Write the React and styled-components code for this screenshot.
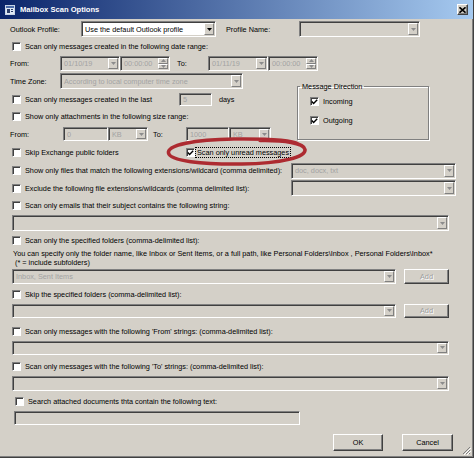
import React from "react";
import styled, { createGlobalStyle } from "styled-components";

const GlobalStyle = createGlobalStyle`
  html, body {
    margin: 0;
    padding: 0;
    background: #d4d0c8;
  }
  body {
    font-family: "Liberation Sans", Arial, sans-serif;
    font-size: 7.3px;
    color: #000;
  }
`;

const Window = styled.div`
  position: relative;
  width: 474px;
  height: 458px;
  box-sizing: border-box;
  background: #d4d0c8;
  border-right: 1px solid #404040;
  border-bottom: 1px solid #404040;
  box-shadow: inset -1px -1px #808080;
  overflow: hidden;
`;

const TitleBar = styled.div`
  height: 19px;
  display: flex;
  align-items: center;
  padding: 0 5px 0 5px;
  background: linear-gradient(to right, #0a246a, #a6caf0);
  color: #fff;
  font-weight: bold;
  font-size: 7.6px;
`;

const TitleText = styled.span`
  margin-left: 5px;
  white-space: nowrap;
`;

const CloseBtn = styled.div`
  margin-left: auto;
  width: 11px;
  height: 11px;
  box-sizing: border-box;
  background: #d4d0c8;
  border: 1px solid;
  border-color: #fff #404040 #404040 #fff;
  box-shadow: inset -1px -1px #808080;
  display: flex;
  align-items: center;
  justify-content: center;
`;

const Body = styled.div`
  padding: 1px 0 0 10px;
  display: flex;
  flex-direction: column;
`;

const Row = styled.div`
  display: flex;
  align-items: center;
  height: ${(p) => p.$h}px;
  margin-top: ${(p) => p.$mt || 0}px;
  flex: 0 0 auto;
`;

const Label = styled.span`
  flex: 0 0 ${(p) => (p.$w ? `${p.$w}px` : "auto")};
  margin-left: ${(p) => p.$ml || 0}px;
  white-space: nowrap;
  line-height: 9px;
  color: ${(p) => (p.$disabled ? "#a0a0a0" : "#000")};
`;

const Box = styled.span`
  flex: 0 0 auto;
  width: 9px;
  height: 9px;
  box-sizing: border-box;
  margin: 0 4px 0 ${(p) => (p.$ml === undefined ? 2 : p.$ml)}px;
  background: #fff;
  border: 1px solid;
  border-color: #808080 #fff #fff #808080;
  box-shadow: inset 1px 1px #404040;
  display: flex;
  align-items: center;
  justify-content: center;
`;

const Focus = styled.span`
  margin-left: -3px;
  padding: 0 1px;
  outline: 1px dotted #000;
  line-height: 9px;
  white-space: nowrap;
`;

const Field = styled.div`
  flex: 0 0 ${(p) => p.$w}px;
  width: ${(p) => p.$w}px;
  height: ${(p) => p.$h || 15}px;
  margin-left: ${(p) => p.$ml || 0}px;
  box-sizing: border-box;
  padding: 1px;
  border: 1px solid;
  border-color: #808080 #fff #fff #808080;
  box-shadow: inset 1px 1px #404040, inset -1px -1px #d4d0c8;
  background: ${(p) => (p.$white ? "#fff" : "#d4d0c8")};
  display: flex;
  align-items: stretch;
`;

const Value = styled.span`
  flex: 1;
  min-width: 0;
  padding-left: 2px;
  display: flex;
  align-items: center;
  white-space: nowrap;
  overflow: hidden;
  color: ${(p) => (p.$disabled ? "#a3a3a3" : "#000")};
`;

const SideBtn = styled.span`
  flex: 0 0 10px;
  box-sizing: border-box;
  background: #d4d0c8;
  border: 1px solid;
  border-color: #fff #808080 #808080 #fff;
  display: flex;
  align-items: center;
  justify-content: center;
`;

const Spin = styled.span`
  flex: 0 0 10px;
  display: flex;
  flex-direction: column;
  & > ${SideBtn} {
    flex: 1;
  }
`;

const Button = styled.button`
  flex: 0 0 ${(p) => p.$w}px;
  width: ${(p) => p.$w}px;
  height: ${(p) => p.$h}px;
  margin: 0 0 0 ${(p) => p.$ml || 0}px;
  padding: 0;
  box-sizing: border-box;
  font: inherit;
  background: #d4d0c8;
  border: 1px solid;
  border-color: #fff #404040 #404040 #fff;
  box-shadow: inset -1px -1px #808080;
  color: ${(p) => (p.disabled ? "#a0a0a0" : "#000")};
  text-shadow: ${(p) => (p.disabled ? "1px 1px #fff" : "none")};
  display: flex;
  align-items: center;
  justify-content: center;
`;

const Split = styled.div`
  display: grid;
  grid-template-columns: 287px 132px;
  grid-template-rows: 18px 18px 17px 18px;
  & > ${Row} {
    grid-column: 1;
  }
`;

const Group = styled.fieldset`
  grid-column: 2;
  grid-row: 1 / 5;
  align-self: start;
  height: 58px;
  box-sizing: border-box;
  margin: 10px 0 0 0;
  padding: 1px 0 0 0;
  border: 1px solid #808080;
  box-shadow: inset 1px 1px #fff, 1px 1px #fff;
  min-width: 0;
`;

const Legend = styled.legend`
  margin-left: 2px;
  padding: 0 2px;
  line-height: 9px;
  font-size: 7.3px;
`;

const Note = styled.div`
  height: 9px;
  line-height: 9px;
  padding-left: ${(p) => p.$pl}px;
  white-space: nowrap;
`;

const ButtonRow = styled.div`
  display: flex;
  justify-content: flex-end;
  gap: 19px;
  margin-top: 9px;
  padding-right: 20px;
`;

const Ring = styled.svg`
  position: absolute;
  left: 164px;
  top: 136px;
  pointer-events: none;
`;

const Grip = styled.svg`
  position: absolute;
  right: 2px;
  bottom: 2px;
`;

const Arrow = ({ up, color = "#000" }) => (
  <svg width="5" height="3" viewBox="0 0 5 3">
    <path d={up ? "M0 3H5L2.5 0Z" : "M0 0H5L2.5 3Z"} fill={color} />
  </svg>
);

const Check = ({ checked, ml }) => (
  <Box $ml={ml}>
    {checked && (
      <svg width="7" height="6" viewBox="0 0 7 6">
        <path d="M0.8 2.6L2.6 4.5L6.2 0.8" stroke="#000" strokeWidth="1.4" fill="none" />
      </svg>
    )}
  </Box>
);

const Combo = ({ w, h = 15, ml, value = "", white, disabled = true }) => (
  <Field $w={w} $h={h} $ml={ml} $white={white}>
    <Value $disabled={disabled}>{value}</Value>
    <SideBtn>
      <Arrow color={disabled ? "#8c8c8c" : "#000"} />
    </SideBtn>
  </Field>
);

const Text = ({ w, h = 14, ml, value = "" }) => (
  <Field $w={w} $h={h} $ml={ml}>
    <Value $disabled>{value}</Value>
  </Field>
);

const Time = ({ w, h = 15, value }) => (
  <Field $w={w} $h={h}>
    <Value $disabled>{value}</Value>
    <Spin>
      <SideBtn>
        <Arrow up color="#8c8c8c" />
      </SideBtn>
      <SideBtn>
        <Arrow color="#8c8c8c" />
      </SideBtn>
    </Spin>
  </Field>
);

export default function App() {
  return (
    <>
      <GlobalStyle />
      <Window>
        <TitleBar>
          <svg width="10" height="10" viewBox="0 0 10 10">
            <rect x="0.5" y="0.5" width="9" height="9" fill="#dfe8f5" stroke="#c8d4e6" />
            <rect x="1" y="1" width="8" height="2" fill="#4a6aa8" />
            <rect x="2" y="4" width="3" height="4" fill="#2c3e6a" />
            <rect x="6" y="4" width="2" height="1" fill="#2c3e6a" />
            <rect x="6" y="6" width="2" height="1" fill="#2c3e6a" />
          </svg>
          <TitleText>Mailbox Scan Options</TitleText>
          <CloseBtn>
            <svg width="7" height="6" viewBox="0 0 7 6">
              <path d="M0.5 0.3L6.5 5.7M6.5 0.3L0.5 5.7" stroke="#000" strokeWidth="1.6" />
            </svg>
          </CloseBtn>
        </TitleBar>

        <Body>
          <Row $h={18}>
            <Label $w={71}>Outlook Profile:</Label>
            <Combo w={135} h={16} white disabled={false} value="Use the default Outlook profile" />
            <Label $w={73} $ml={10}>Profile Name:</Label>
            <Combo w={121} h={16} />
          </Row>

          <Row $h={17}>
            <Check />
            <Label>Scan only messages created in the following date range:</Label>
          </Row>

          <Row $h={17}>
            <Label $w={50}>From:</Label>
            <Combo w={60} value="01/10/19" />
            <Time w={50} value="00:00:00" />
            <Label $w={31} $ml={7}>To:</Label>
            <Combo w={60} value="01/11/19" />
            <Time w={50} value="00:00:00" />
          </Row>

          <Split>
            <Row $h={18}>
              <Label $w={50}>Time Zone:</Label>
              <Combo w={183} h={16} value="According to local computer time zone" />
            </Row>
            <Row $h={18}>
              <Check />
              <Label $w={154}>Scan only messages created in the last</Label>
              <Text w={33} h={13} value="5" />
              <Label $ml={7}>days</Label>
            </Row>
            <Row $h={17}>
              <Check />
              <Label>Show only attachments in the following size range:</Label>
            </Row>
            <Row $h={18}>
              <Label $w={53}>From:</Label>
              <Text w={45} value="0" />
              <Combo w={40} h={14} value="KB" />
              <Label $w={33} $ml={5}>To:</Label>
              <Text w={43} value="1000" />
              <Combo w={42} h={14} value="KB" />
            </Row>
            <Group>
              <Legend>Message Direction</Legend>
              <Row $h={19}>
                <Check checked ml={12} />
                <Label>Incoming</Label>
              </Row>
              <Row $h={19}>
                <Check checked ml={12} />
                <Label>Outgoing</Label>
              </Row>
            </Group>
          </Split>

          <Row $h={19}>
            <Check />
            <Label $w={161}>Skip Exchange public folders</Label>
            <Check checked ml={0} />
            <Focus>Scan only unread messages</Focus>
          </Row>

          <Row $h={17}>
            <Check />
            <Label $w={266}>Show only files that match the following extensions/wildcard (comma delimited):</Label>
            <Combo w={165} h={16} value="doc, docx, txt" />
          </Row>

          <Row $h={18}>
            <Check />
            <Label $w={266}>Exclude the following file extensions/wildcards (comma delimited list):</Label>
            <Combo w={165} h={16} />
          </Row>

          <Row $h={17}>
            <Check />
            <Label>Scan only emails that their subject contains the following string:</Label>
          </Row>
          <Row $h={18}>
            <Combo w={437} h={16} ml={2} />
          </Row>

          <Row $h={17}>
            <Check />
            <Label>Scan only the specified folders (comma-delimited list):</Label>
          </Row>
          <Note $pl={3}>
            You can specify only the folder name, like Inbox or Sent Items, or a full path, like Personal Folders\Inbox , Personal Folders\Inbox*
          </Note>
          <Note $pl={5}>(* = include subfolders)</Note>
          <Row $h={19}>
            <Combo w={384} ml={2} value="Inbox, Sent Items" />
            <Button $w={45} $h={15} $ml={8} disabled>
              Add
            </Button>
          </Row>

          <Row $h={17}>
            <Check />
            <Label>Skip the specified folders (comma-delimited list):</Label>
          </Row>
          <Row $h={15}>
            <Combo w={384} h={14} ml={2} />
            <Button $w={45} $h={14} $ml={8} disabled>
              Add
            </Button>
          </Row>

          <Row $h={17} $mt={5}>
            <Check />
            <Label>Scan only messages with the following 'From' strings: (comma-delimited list):</Label>
          </Row>
          <Row $h={15}>
            <Combo w={437} h={14} ml={2} />
          </Row>

          <Row $h={18} $mt={2}>
            <Check />
            <Label>Scan only messages with the following 'To' strings: (comma-delimited list):</Label>
          </Row>
          <Row $h={16}>
            <Combo w={437} h={15} ml={2} />
          </Row>

          <Row $h={18} $mt={1}>
            <Check ml={5} />
            <Label>Search attached documents thta contain the following text:</Label>
          </Row>
          <Row $h={15}>
            <Text w={286} ml={4} />
          </Row>

          <ButtonRow>
            <Button $w={50} $h={17}>OK</Button>
            <Button $w={51} $h={17}>Cancel</Button>
          </ButtonRow>
        </Body>

        <Ring width="146" height="32" viewBox="0 0 146 32">
          <path
            d="M96 4.5C120 4 140 7 141 13.5C142 21 118 27.5 78 28C38 28.5 6 25 4.5 17C3 9 30 3.5 70 3C100 2.7 128 4 134 8"
            fill="none"
            stroke="#ad2b31"
            strokeWidth="3.6"
            strokeLinecap="round"
          />
        </Ring>

        <Grip width="9" height="9" viewBox="0 0 9 9">
          <path d="M8 1L1 8M8 4L4 8M8 7L7 8" stroke="#808080" strokeWidth="1" />
          <path d="M9 2L2 9M9 5L5 9" stroke="#fff" strokeWidth="1" />
        </Grip>
      </Window>
    </>
  );
}
